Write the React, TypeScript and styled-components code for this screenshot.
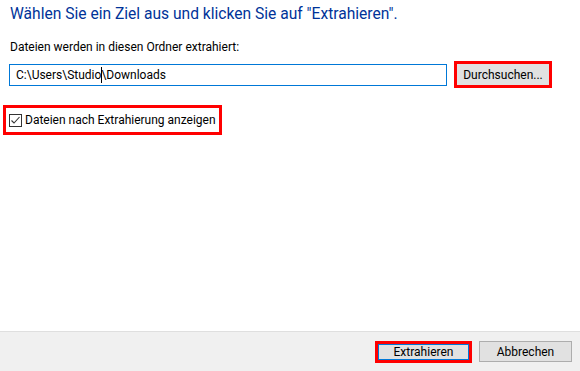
import React from "react";
import styled, { createGlobalStyle } from "styled-components";

const Global = createGlobalStyle`
  html, body { margin: 0; padding: 0; background: #ffffff; }
  body { font-family: Roboto, "Noto Sans", sans-serif; }
`;

const Dialog = styled.div`
  width: 580px;
  height: 371px;
  display: flex;
  flex-direction: column;
  background: #ffffff;
  color: #000000;
  font-family: Roboto, "Noto Sans", sans-serif;
  font-size: 12px;
`;

const Content = styled.main`
  flex: 1;
  display: flex;
  flex-direction: column;
  align-items: flex-start;
  padding: 4px 10px 0 10px;
`;

const Title = styled.h1`
  margin: 0 0 15px 0;
  font-size: 15.6px;
  line-height: 20px;
  font-weight: 400;
  color: #003399;
  white-space: nowrap;
`;

const Label = styled.div`
  line-height: 16px;
  margin-bottom: 6px;
  white-space: nowrap;
`;

const PathRow = styled.div`
  display: flex;
  align-items: center;
  gap: 7px;
  align-self: stretch;
  margin-left: -1px;
  margin-bottom: 17px;
`;

const PathInput = styled.div`
  width: 438px;
  height: 22px;
  box-sizing: border-box;
  border: 1px solid #0078d7;
  padding: 0 6px;
  display: flex;
  align-items: center;
  white-space: nowrap;
  line-height: 16px;
`;

const Caret = styled.span`
  display: inline-block;
  width: 1px;
  height: 16px;
  background: #000000;
  margin: 0 -1px 0 0;
`;

const Highlight = styled.div`
  border: 3px solid #ff0000;
  display: flex;
  align-items: center;
`;

const Button = styled.button<{ $primary?: boolean; $highlight?: boolean }>`
  box-sizing: border-box;
  width: ${(p) => (p.$highlight ? "97px" : "93px")};
  height: ${(p) => (p.$highlight ? "22px" : "21px")};
  margin: 0;
  padding: 0;
  background: #e1e1e1;
  border: ${(p) => (p.$highlight ? "3px solid #ff0000" : "1px solid #adadad")};
  box-shadow: ${(p) => (p.$primary ? "inset 0 0 0 1px #0078d7" : "none")};
  font-family: Roboto, "Noto Sans", sans-serif;
  font-size: 12px;
  line-height: 14px;
  color: #000000;
  display: flex;
  align-items: center;
  justify-content: center;
`;

const BrowseButton = styled(Button)`
  width: 92px;
  height: 21px;
  border: none;
`;

const CheckRow = styled.label`
  display: flex;
  align-items: center;
  gap: 3px;
  border: 3px solid #ff0000;
  padding: 2px 3px 2px 3px;
  height: 20px;
  margin-left: -7px;
  white-space: nowrap;
  line-height: 16px;
`;

const CheckBox = styled.span`
  width: 13px;
  height: 13px;
  box-sizing: border-box;
  border: 1px solid #333333;
  background: #ffffff;
  display: flex;
  align-items: center;
  justify-content: center;
`;

const Footer = styled.footer`
  height: 40px;
  box-sizing: border-box;
  border-top: 1px solid #dfdfdf;
  background: #f0f0f0;
  display: flex;
  align-items: center;
  justify-content: flex-end;
  gap: 7px;
  padding: 0 8px 0 0;
`;

export default function App() {
  return (
    <>
      <Global />
      <Dialog>
        <Content>
          <Title>Wählen Sie ein Ziel aus und klicken Sie auf "Extrahieren".</Title>
          <Label>Dateien werden in diesen Ordner extrahiert:</Label>
          <PathRow>
            <PathInput>
              C:\Users\Studio<Caret />\Downloads
            </PathInput>
            <Highlight>
              <BrowseButton>Durchsuchen...</BrowseButton>
            </Highlight>
          </PathRow>
          <CheckRow>
            <CheckBox>
              <svg width="11" height="11" viewBox="0 0 11 11">
                <path d="M1.5 5.5 L4 8 L9.5 2" fill="none" stroke="#333333" strokeWidth="1.1" />
              </svg>
            </CheckBox>
            Dateien nach Extrahierung anzeigen
          </CheckRow>
        </Content>
        <Footer>
          <Button $primary $highlight>Extrahieren</Button>
          <Button>Abbrechen</Button>
        </Footer>
      </Dialog>
    </>
  );
}
